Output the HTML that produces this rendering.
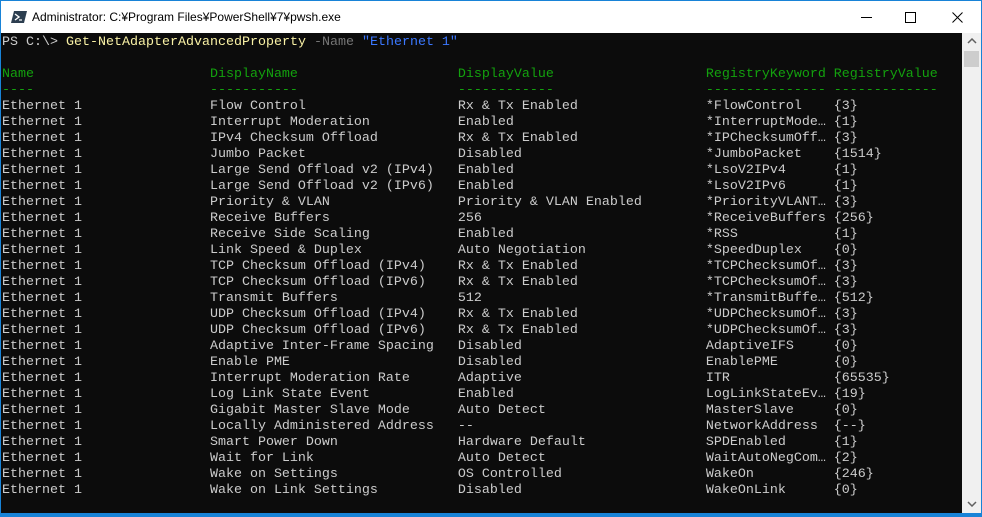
<!DOCTYPE html>
<html><head><meta charset="utf-8"><style>
body{margin:0;width:982px;height:517px;overflow:hidden;background:#fff;position:relative;font-family:"Liberation Sans",sans-serif}
.win{position:absolute;left:0;top:0;width:980px;height:515px;border:1px solid #1883d7;background:#fff}
.title{position:absolute;left:0;top:0;width:980px;height:32px;background:#fff}
.title .t{position:absolute;left:31px;top:9px;font-size:12px;color:#000;font-family:"Liberation Sans","Noto Sans CJK JP",sans-serif}
.term{position:absolute;left:0;top:32px;width:961px;height:480px;background:#0c0c0c;overflow:hidden}
pre{margin:0;position:absolute;left:1px;top:2px;font-family:"Liberation Mono",monospace;font-size:13.33px;line-height:16px;color:#cccccc}
.g{color:#13a10e}
.y{color:#f9f1a5}.d{color:#767676}.b{color:#3b78ff}
.sb{position:absolute;left:961px;top:32px;width:19px;height:480px;background:#f0f0f0}
.thumb{position:absolute;left:2px;top:18px;width:15px;height:16px;background:#cdcdcd}
.bot{position:absolute;left:0;top:512px;width:980px;height:3px;background:#1883d7}
</style></head><body>
<div class="win">
<div class="title">
<svg style="position:absolute;left:10px;top:9px" width="16" height="14" viewBox="0 0 16 14"><polygon points="3,1 16,1 13,13 0,13" fill="#2c3e50"/><path d="M4 4 L8 7 L4 10" stroke="#fff" stroke-width="1.4" fill="none"/><path d="M8 10 H11" stroke="#fff" stroke-width="1.2"/></svg>
<div class="t">Administrator: C:¥Program Files¥PowerShell¥7¥pwsh.exe</div>
<svg style="position:absolute;left:860px;top:16px" width="12" height="2"><rect width="11" height="1" fill="#000"/></svg>
<svg style="position:absolute;left:904px;top:11px" width="12" height="12"><rect x="0.5" y="0.5" width="10" height="10" fill="none" stroke="#000"/></svg>
<svg style="position:absolute;left:951px;top:11px" width="12" height="12"><path d="M0.5 0.5 L10.5 10.5 M10.5 0.5 L0.5 10.5" stroke="#000"/></svg>
</div>
<div class="term"><pre>PS C:\&gt; <span class="y">Get-NetAdapterAdvancedProperty</span> <span class="d">-Name</span> <span class="b">"Ethernet 1"</span>

<span class="g">Name                      DisplayName                    DisplayValue                   RegistryKeyword RegistryValue
----                      -----------                    ------------                   --------------- -------------</span>
Ethernet 1                Flow Control                   Rx &amp; Tx Enabled                *FlowControl    {3}
Ethernet 1                Interrupt Moderation           Enabled                        *InterruptMode… {1}
Ethernet 1                IPv4 Checksum Offload          Rx &amp; Tx Enabled                *IPChecksumOff… {3}
Ethernet 1                Jumbo Packet                   Disabled                       *JumboPacket    {1514}
Ethernet 1                Large Send Offload v2 (IPv4)   Enabled                        *LsoV2IPv4      {1}
Ethernet 1                Large Send Offload v2 (IPv6)   Enabled                        *LsoV2IPv6      {1}
Ethernet 1                Priority &amp; VLAN                Priority &amp; VLAN Enabled        *PriorityVLANT… {3}
Ethernet 1                Receive Buffers                256                            *ReceiveBuffers {256}
Ethernet 1                Receive Side Scaling           Enabled                        *RSS            {1}
Ethernet 1                Link Speed &amp; Duplex            Auto Negotiation               *SpeedDuplex    {0}
Ethernet 1                TCP Checksum Offload (IPv4)    Rx &amp; Tx Enabled                *TCPChecksumOf… {3}
Ethernet 1                TCP Checksum Offload (IPv6)    Rx &amp; Tx Enabled                *TCPChecksumOf… {3}
Ethernet 1                Transmit Buffers               512                            *TransmitBuffe… {512}
Ethernet 1                UDP Checksum Offload (IPv4)    Rx &amp; Tx Enabled                *UDPChecksumOf… {3}
Ethernet 1                UDP Checksum Offload (IPv6)    Rx &amp; Tx Enabled                *UDPChecksumOf… {3}
Ethernet 1                Adaptive Inter-Frame Spacing   Disabled                       AdaptiveIFS     {0}
Ethernet 1                Enable PME                     Disabled                       EnablePME       {0}
Ethernet 1                Interrupt Moderation Rate      Adaptive                       ITR             {65535}
Ethernet 1                Log Link State Event           Enabled                        LogLinkStateEv… {19}
Ethernet 1                Gigabit Master Slave Mode      Auto Detect                    MasterSlave     {0}
Ethernet 1                Locally Administered Address   --                             NetworkAddress  {--}
Ethernet 1                Smart Power Down               Hardware Default               SPDEnabled      {1}
Ethernet 1                Wait for Link                  Auto Detect                    WaitAutoNegCom… {2}
Ethernet 1                Wake on Settings               OS Controlled                  WakeOn          {246}
Ethernet 1                Wake on Link Settings          Disabled                       WakeOnLink      {0}</pre></div>
<div class="sb"><div class="thumb"></div>
<svg style="position:absolute;left:5px;top:5px" width="10" height="6"><path d="M1 5 L5 1 L9 5" stroke="#606060" stroke-width="1.5" fill="none"/></svg>
<svg style="position:absolute;left:5px;top:468px" width="10" height="6"><path d="M1 1 L5 5 L9 1" stroke="#606060" stroke-width="1.5" fill="none"/></svg>
</div>
<div class="bot"></div>
</div>
</body></html>
